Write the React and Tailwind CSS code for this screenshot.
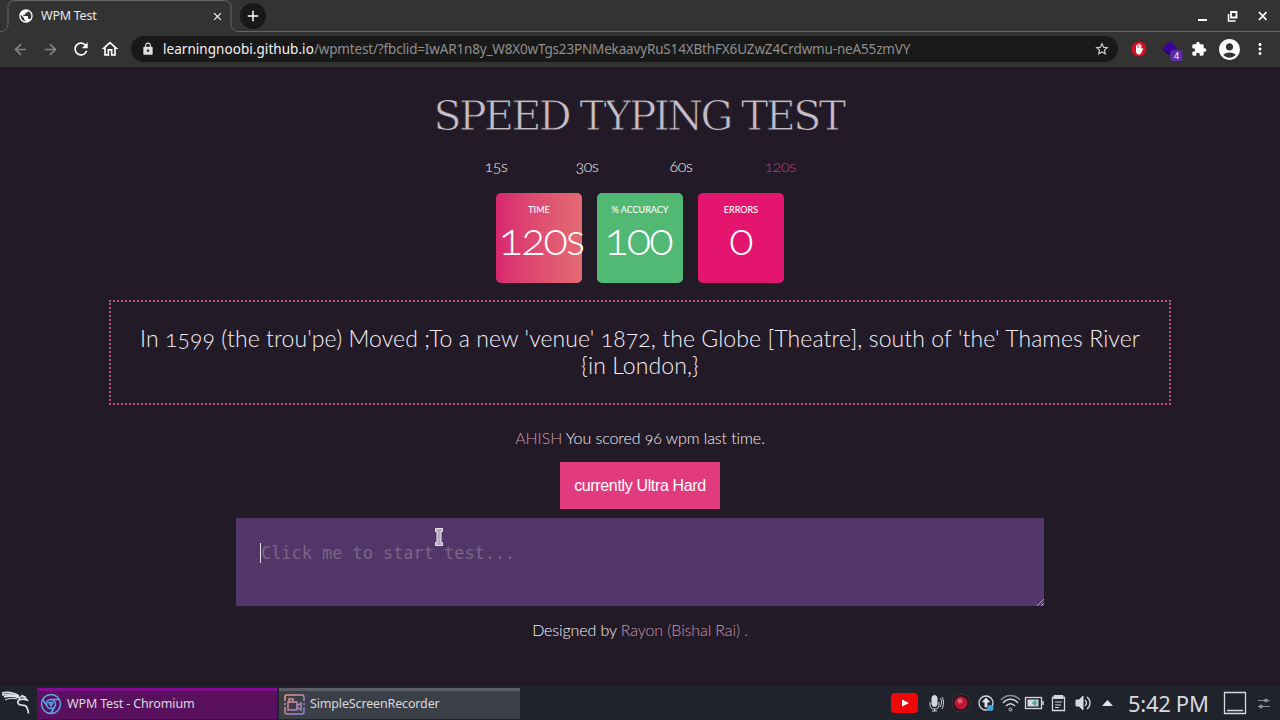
import { ArrowLeft, ArrowRight } from "lucide-react";
import {
  MdClose,
  MdAdd,
  MdRefresh,
  MdOutlineHome,
  MdLock,
  MdStarOutline,
  MdExtension,
  MdAccountCircle,
  MdMoreVert,
  MdPublic,
} from "react-icons/md";

const times = [
  { label: "15s", className: "w-[91px]" },
  { label: "30s", className: "w-[94px]" },
  { label: "60s", className: "w-[95px]" },
  { label: "120s", className: "w-[97px] text-[#c43c7c]" },
];

function TabStrip() {
  return (
    <div className="relative flex h-8 items-center bg-[#333333]">
      <svg className="absolute inset-0" width="1280" height="33" fill="none" stroke="#666666">
        <path d="M0 31.5c5 0 8-3 8-8V7c0-4 3-6.500 7-6.500h209c4 0 7 2.500 7 6.500v16.500c0 5 3 8 8 8h1041" />
      </svg>
      <MdPublic className="ml-[18px] size-4 text-white" />
      <span className="ml-[7px] w-[170px] text-[12.500px] tracking-[-0.25px] text-[#e8e8e8]">WPM Test</span>
      <MdClose className="size-[13px] text-white" />
      <div className="ml-4 flex size-[26px] items-center justify-center rounded-full bg-[#181818]">
        <MdAdd className="size-[18px] text-white" />
      </div>
      <svg className="ml-auto mr-[13px]" width="70" height="16" fill="none" stroke="#ffffff">
        <path d="M1 12h9" strokeWidth="2" />
        <path d="M34 4h5.500v5.500H34z" strokeWidth="1.800" />
        <path d="M31.500 6v7h7" strokeWidth="1.500" />
        <path d="m62 4 7.500 8m0-8L62 12" strokeWidth="1.800" />
      </svg>
    </div>
  );
}

function AddressBar() {
  return (
    <div className="flex h-[35px] items-center bg-[#333333] pb-px">
      <ArrowLeft className="ml-3 size-[17px] text-[#858585]" strokeWidth={2.4} />
      <ArrowRight className="ml-[13px] size-[17px] text-[#858585]" strokeWidth={2.4} />
      <MdRefresh className="ml-[12px] size-[20px] text-white" />
      <MdOutlineHome className="ml-[9px] size-[20px] text-white" />
      <div className="ml-[11px] flex h-[26px] w-[987px] items-center rounded-full bg-[#191919] pl-2.5 pr-[8px]">
        <MdLock className="size-[14px] text-[#e0e0e0]" />
        <span className="ml-2 whitespace-nowrap text-[13.500px] tracking-[-0.160px] text-[#8f8f8f]">
          <span className="tracking-[0.050px] text-[#f2f2f2]">learningnoobi.github.io</span>
          /wpmtest/?fbclid=IwAR1n8y_W8X0wTgs23PNMekaavyRuS14XBthFX6UZwZ4Crdwmu-neA55zmVY
        </span>
        <MdStarOutline className="ml-auto size-4 text-[#dddddd]" />
      </div>
      <svg className="ml-[12px]" width="18" height="18">
        <circle cx="9" cy="9" r="7.500" fill="#cf1020" />
        <path d="M6 8V5.500h1V8h.4V4h1v4h.4V3.500h1V8h.4V4.500h1.200V9l1.300-1 .6.700-1.700 3.500c-.6 1.500-1.500 2.300-2.800 2.300C7 14.500 6 13 6 11z" fill="#ffffff" />
      </svg>
      <svg className="ml-[13px]" width="22" height="24">
        <path d="m9 4 7 7-8 7-7-6z" fill="#3c009c" />
        <path d="m1 12 7 3v3z" fill="#22005c" />
        <rect x="9.500" y="13" width="12" height="11" rx="2" fill="#5b2ca8" />
        <text x="15.500" y="22" textAnchor="middle" fontSize="9" fill="#ffffff">4</text>
      </svg>
      <MdExtension className="ml-[8px] size-[16px] text-white" />
      <MdAccountCircle className="ml-[10px] size-[25px] text-white" />
      <MdMoreVert className="ml-[9px] size-[18px] text-white" />
    </div>
  );
}

function StatCard({ label, value, className, valueClass }) {
  return (
    <div className={`flex h-[90px] w-[86px] flex-col items-center rounded-[5px] pt-[11px] text-white ${className}`}>
      <span className="text-[9px] font-medium leading-3">{label}</span>
      <span className={`mt-0.5 whitespace-nowrap text-[45px] leading-[40px] oldstyle-nums ${valueClass}`}>{value}</span>
    </div>
  );
}

function TypingPage() {
  return (
    <main className="flex h-[619px] flex-col items-center bg-[#221a26] font-[Lato] font-light text-[#f5f0f6]">
      <h1 className="-ml-[3px] mt-6 whitespace-nowrap font-['DejaVu_Serif'] text-[41px] leading-[50px] tracking-[-2.600px] text-[#c5bdc8] [-webkit-text-stroke:0.8px_#221a26]">
        SPEED TYPING TEST
      </h1>
      <div className="mt-[13px] flex pl-[66px] text-[16px] leading-6 tracking-[-0.400px] oldstyle-nums">
        {times.map((time) => (
          <span key={time.label} className={time.className}>
            {time.label}
          </span>
        ))}
      </div>
      <div className="mt-[15px] flex gap-[15px]">
        <StatCard
          label="TIME"
          value="120s"
          className="bg-linear-to-r from-[#d8276f] to-[#e46a72]"
          valueClass="pl-[4px] tracking-[-1.900px]"
        />
        <StatCard label="% ACCURACY" value="100" className="bg-[#52b974]" valueClass="pr-[4px] tracking-[-1.900px]" />
        <StatCard label="ERRORS" value="0" className="bg-[#e3156f]" valueClass="tracking-[-1px]" />
      </div>
      <div className="mt-[17px] flex h-[105px] w-[1062px] flex-col items-center border-2 border-dotted border-[#bd5088] pt-[23px] text-center text-[23px] leading-[27px] tracking-[0.090px] oldstyle-nums">
        <p className="whitespace-nowrap">
          In 1599 (the trou'pe) Moved ;To a new 'venue' 1872, the Globe [Theatre], south of 'the' Thames River
        </p>
        <p>{"{in London,}"}</p>
      </div>
      <p className="mt-[21px] text-[16px] leading-6 tracking-[-0.080px] oldstyle-nums">
        <span className="text-[#cc96b4]">AHISH</span> You scored 96 wpm last time.
      </p>
      <button className="mt-3 h-[47px] w-40 bg-[#e13a7e] font-['Liberation_Sans'] text-[16px] font-normal tracking-[-0.350px] text-white">
        currently Ultra Hard
      </button>
      <div className="relative mt-[9px] flex h-[88px] w-[808px] bg-[#533669] pl-6 pt-[23px] font-['DejaVu_Sans_Mono'] text-[16.900px] font-normal text-[#796585]">
        <span className="mt-0.5 h-5 w-px bg-[#e5dce8]" />
        <span className="leading-6">Click me to start test...</span>
        <svg className="absolute bottom-0 right-0" width="8" height="8" stroke="#b8a8c2">
          <path d="m1 8 7-7M5 8l3-3" />
        </svg>
        <svg className="absolute left-[199px] top-[10px]" width="8" height="18">
          <path d="M.5.500h7v3H6v11h1.500v3h-7v-3H2v-11H.5z" fill="#b8a7c0" stroke="#eee5f0" />
        </svg>
      </div>
      <p className="mt-3 text-[16px] leading-6 tracking-[-0.100px]">
        Designed by <span className="text-[#cc96b4]">Rayon (Bishal Rai) .</span>
      </p>
    </main>
  );
}

function TrayIcons() {
  return (
    <svg width="232" height="34" fill="none" stroke="#d5d8de">
      <rect x="1" y="7" width="27" height="20" rx="4" fill="#ef0808" stroke="none" />
      <path d="m12 13.500 7 3.500-7 3.500z" fill="#ffffff" stroke="none" />
      <rect x="42" y="9.500" width="5" height="11" rx="2.500" fill="#d5d8de" />
      <path d="M40 16v3c0 3 2 4 4.500 4S49 22 49 19v-3M44.500 23v2M42 25h5M50 12c2 2 2 6 0 9M52 11c2 3 2 8 0 12" />
      <circle cx="71" cy="17" r="9" fill="#19191d" stroke="#4c3337" />
      <circle cx="71" cy="17" r="6.500" fill="#bd1738" stroke="none" />
      <circle cx="70" cy="15" r="2.500" fill="#e25a70" stroke="none" />
      <circle cx="96" cy="17" r="7" strokeWidth="1.300" />
      <path d="m96 12 3.500 4H97v5h-2v-5h-2.500z" fill="#e5e7ea" />
      <circle cx="100.500" cy="22" r="3" fill="#37a7dc" stroke="none" />
      <path d="M111 14c5-6 14-6 19 0" stroke="#8c9097" strokeWidth="1.500" />
      <path d="M113 17c4-5 11-5 15 0M116 20c3-3 6-3 9 0" strokeWidth="1.400" />
      <circle cx="120.500" cy="23.500" r="1.500" />
      <rect x="135.500" y="11.500" width="16" height="11" strokeWidth="1.300" />
      <path d="M137.500 13.500h11v7h-11z" fill="#d5d8de" stroke="none" />
      <path d="M142 17l4-3v6zM145 17h3" fill="#36ae91" stroke="#36ae91" strokeWidth="0.500" />
      <path d="M153 15v4" strokeWidth="1.500" />
      <path d="M162.500 11.500h12v13h-12z" strokeWidth="1.300" />
      <path d="M164 9.500h9v3h-9z" fill="#d5d8de" />
      <path d="M165 16h7M165 19h6M165 21.500h4" />
      <path d="M186 14h3l4-4v14l-4-4h-3z" fill="#d5d8de" />
      <path d="M195 14c2 2 2 4 0 6M197 11c4 3 4 9 0 12" strokeWidth="1.300" />
      <path d="m212 20 5.500-6 5.500 6z" fill="#e2e4e8" stroke="none" />
    </svg>
  );
}

function Taskbar() {
  return (
    <footer className="flex h-[34px] items-center bg-[#20222c] text-[12.500px] tracking-[-0.150px] text-[#d9dadd]">
      <svg className="mx-0.5" width="30" height="30" fill="none" stroke="#dfe3e7">
        <path d="M0 5c7-1.500 12 0 17 3M2 9c6-2 10-1 15 0" strokeWidth="1.800" />
        <path d="M0 7c7-1 12 0 17 3 3-3 6-1 8 2-3-1-7-2-9 1-1 4 3 4 7 4.500 2 1 3 4 3.500 8" strokeWidth="1.700" />
        <path d="M3 12c4-2 8-2 12-1M19 7l5 2" />
      </svg>
      <div className="ml-[3px] flex h-[31px] w-[240px] items-center border-t-[3px] border-[#830b8f] bg-[#59115f] pb-px pl-[3px]">
        <svg width="22" height="22" fill="none" stroke="#58a9e8" strokeWidth="1.500">
          <circle cx="11" cy="11" r="9.500" />
          <circle cx="11" cy="11" r="4.500" />
          <path d="M11 6.500h8.500M7 13 2.500 6M15 13.500l-4.500 7" />
          <path d="m9 9.500 4 0-2 3.500z" />
        </svg>
        <span className="ml-[5px]">WPM Test - Chromium</span>
      </div>
      <div className="ml-[2px] flex h-[31px] w-[241px] items-center border-t-[3px] border-[#5b5e67] bg-[#3b3f48] pb-px pl-[5px]">
        <svg width="21" height="21" fill="none" stroke="url(#rec)" strokeWidth="1.500">
          <defs>
            <linearGradient id="rec" gradientUnits="userSpaceOnUse" x1="0" y1="0" x2="21" y2="21">
              <stop stopColor="#f1a071" />
              <stop offset=".5" stopColor="#c585ae" />
              <stop offset="1" stopColor="#7985e5" />
            </linearGradient>
          </defs>
          <path d="M1 7V3q0-2 2-2h15q2 0 2 2v4M1 13v5q0 2 2 2h15q2 0 2-2v-5" />
          <path d="M4 8h9v8H4zM13 12l4-3v7l-4-3M5 8V5h4v3M1 9v2M20 9v2" />
        </svg>
        <span className="ml-[5px]">SimpleScreenRecorder</span>
      </div>
      <div className="ml-auto flex items-center">
        <TrayIcons />
        <span className="ml-[6px] w-[95px] whitespace-nowrap text-[22px] leading-8 tracking-[-0.300px]">5:42 PM</span>
        <svg width="57" height="34" fill="none" stroke="#d9dadd">
          <path d="M1.500 6.500h21v21h-21zM4 24.500h16" strokeWidth="1.300" />
          <path d="M35 14.500h12M35 20.500h12" stroke="#888b92" />
          <circle cx="43" cy="14.500" r="1.500" stroke="#a8aab0" />
          <circle cx="38" cy="20.500" r="1.500" stroke="#a8aab0" />
        </svg>
      </div>
    </footer>
  );
}

export default function App() {
  return (
    <div className="h-[720px] w-[1280px] overflow-hidden bg-[#221a26] font-['Noto_Sans',sans-serif]">
      <TabStrip />
      <AddressBar />
      <TypingPage />
      <Taskbar />
    </div>
  );
}
